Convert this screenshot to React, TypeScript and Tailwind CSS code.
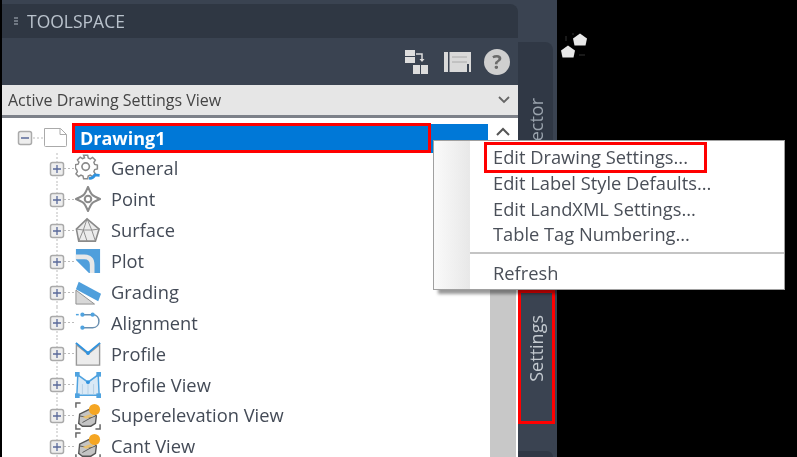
import type { ReactNode } from "react";

const gray = "#8a8a8a";
const blue = "#4fa3e0";

function Gear() {
  return (
    <svg width="26" height="28" viewBox="0 0 28 30" fill="none" stroke={gray} strokeWidth="1.8">
      <path d="M10.500 1.500h5l.7 3.300 2.500 1 2.800-1.800 3.400 3.400-1.800 2.800 1 2.500 3.300.7v4.800l-3.300.7-1 2.500 1.800 2.800-3.400 3.400-2.800-1.800-2.500 1-.7 3.300h-5l-.7-3.300-2.500-1-2.800 1.800-3.400-3.400 1.800-2.800-1-2.500L.500 17.900v-4.800l3.300-.7 1-2.500L3 7.100l3.400-3.400 2.800 1.800 2.500-1z" transform="scale(.88)" />
      <circle cx="11.500" cy="13.500" r="4" />
      <path d="M15 26c3 .5 5-1 6.500-3.500l5 .5" stroke="#2f93e0" strokeWidth="3" />
    </svg>
  );
}

function Point() {
  return (
    <svg width="26" height="26" viewBox="0 0 28 28" fill="none" stroke={gray} strokeWidth="2.200">
      <path d="M14 1c2 5 3 7 4.500 8.500C20 11 22 12 27 14c-5 2-7 3-8.500 4.500C17 20 16 22 14 27c-2-5-3-7-4.500-8.500C8 17 6 16 1 14c5-2 7-3 8.500-4.500C11 8 12 6 14 1z" strokeLinejoin="round" />
      <circle cx="14" cy="14" r="3.500" />
    </svg>
  );
}

function Surface() {
  return (
    <svg width="26" height="26" viewBox="0 0 28 28" fill="none" stroke={gray} strokeWidth="1.700">
      <path d="M13 2l13 11-4 13H4L1.500 13z" fill="#ececec" />
      <path d="M13 2L9 14l-7.500-1M13 2l5 12 8-1M9 14h9M9 14L4 26M9 14l4 12M18 14l4 12" strokeWidth="1" />
    </svg>
  );
}

function Plot() {
  return (
    <svg width="26" height="26" viewBox="0 0 28 28">
      <path d="M1 1h26v26H15L1 13z" fill="#4f9fdc" />
      <path d="M1 7h9c7 0 11 4 11 11v9h-5v-9c0-4-2-6-6-6H1z" fill="#e8e8e8" />
    </svg>
  );
}

function Grading() {
  return (
    <svg width="26" height="26" viewBox="0 0 28 28">
      <path d="M1 27V12l20 15z" fill="#d8d8d8" stroke={gray} />
      <path d="M4 3l24 13-3 8L1 11z" fill="#4f9fdc" />
    </svg>
  );
}

function Alignment() {
  return (
    <svg width="26" height="26" viewBox="0 0 28 28" fill="none" stroke={blue} strokeWidth="1.600">
      <path d="M1 5h3" />
      <path d="M8 5h11c9 0 9 14 0 14H9" stroke="#6a8fb0" />
      <circle cx="8" cy="5" r="1.500" fill={blue} />
      <circle cx="19" cy="5" r="1.500" fill={blue} />
      <circle cx="8" cy="19" r="1.500" fill={blue} />
    </svg>
  );
}

function Profile() {
  return (
    <svg width="26" height="26" viewBox="0 0 28 28" fill="none">
      <path d="M1.500 4l12.500 10L26.500 4v22h-25z" fill="#ececec" stroke="#999" strokeWidth="1.500" />
      <path d="M1 2l13 11L27 2" stroke="#2f93e0" strokeWidth="2" />
      <circle cx="14" cy="13" r="2" fill="#2f93e0" />
    </svg>
  );
}

function ProfileView() {
  return (
    <svg width="26" height="26" viewBox="0 0 28 28" fill="none">
      <path d="M3 3l11 8 11-8 1 22H2z" fill="#d9e9f6" stroke="#4fa3e0" strokeWidth="1.600" />
      <path d="M8 13v11M14 13v11M20 13v11" stroke="#b5cfe4" />
      <rect x="0" y="0" width="5" height="5" fill="#4fa3e0" />
      <rect x="23" y="0" width="5" height="5" fill="#4fa3e0" />
      <rect x="0" y="23" width="5" height="5" fill="#4fa3e0" />
      <rect x="23" y="23" width="5" height="5" fill="#4fa3e0" />
      <circle cx="14" cy="11" r="2" fill="#2f93e0" />
    </svg>
  );
}

function Cant() {
  return (
    <svg width="26" height="28" viewBox="0 0 28 30" fill="none">
      <path d="M1 6V1h5M1 24v5h5M22 29h5v-5" stroke="#666" strokeWidth="1.600" />
      <path d="M5 13l12-6 6 8-1 8-5 3H8l-4-3z" fill="#c4c4c4" stroke="#555" strokeWidth="1.500" />
      <path d="M5 15l12 2 5-2M8 22l9-5" stroke="#555" />
      <path d="M8 16l8-3 4 2-8 3z" fill="#e8c070" />
      <circle cx="21" cy="8" r="6" fill="#f5a623" />
    </svg>
  );
}

// tree connector with the plus box and dashed lines
function Connector() {
  return (
    <svg width="73" height="31" viewBox="0 0 73 31" fill="none" className="shrink-0">
      <path d="M55 0v31" stroke="#bbb" strokeDasharray="2 2" />
      <path d="M62 15.500h10" stroke="#bbb" strokeDasharray="2 2" />
      <rect x="48.500" y="9.500" width="13" height="13" rx="2" fill="#eee" stroke="#aaa" strokeWidth="1.500" />
      <path d="M51 16h8M55 12v8" stroke="#5a6a9a" strokeWidth="1.300" />
    </svg>
  );
}

const items: { name: string; Icon: () => ReactNode }[] = [
  { name: "General", Icon: Gear },
  { name: "Point", Icon: Point },
  { name: "Surface", Icon: Surface },
  { name: "Plot", Icon: Plot },
  { name: "Grading", Icon: Grading },
  { name: "Alignment", Icon: Alignment },
  { name: "Profile", Icon: Profile },
  { name: "Profile View", Icon: ProfileView },
  { name: "Superelevation View", Icon: Cant },
  { name: "Cant View", Icon: Cant },
];

const menuItems = ["Edit Drawing Settings...", "Edit Label Style Defaults...", "Edit LandXML Settings...", "Table Tag Numbering..."];

export default function App() {
  return (
    <div
      className="relative flex h-[457px] w-[797px] overflow-hidden bg-black blur-[0.7px]"
      style={{ fontFamily: '"Open Sans", "Noto Sans", sans-serif' }}
    >
      {/* main palette */}
      <div className="ml-[2px] flex w-[516px] flex-col bg-[#3a4351]">
        <div className="mt-[4px] flex h-[34px] shrink-0 items-center rounded-tr-lg bg-[#2f3743] pl-[12px]">
          <div className="grid grid-cols-1 gap-[1px]">
            <span className="h-[2px] w-[4px] bg-[#6f7782]" />
            <span className="h-[2px] w-[4px] bg-[#6f7782]" />
            <span className="h-[2px] w-[4px] bg-[#6f7782]" />
          </div>
          <span className="ml-[9px] text-[17.500px] text-[#b9c2cc]">TOOLSPACE</span>
        </div>

        <div className="flex h-[47px] shrink-0 items-center justify-end rounded-tr-lg pr-[8px]">
          <svg width="26" height="26" viewBox="0 0 26 26" fill="none" className="mr-[14px]">
            <rect x="1" y="1" width="10" height="6" fill="#ddd" />
            <rect x="1" y="8" width="10" height="6" fill="#ddd" />
            <rect x="9" y="16" width="7" height="9" fill="#ddd" />
            <rect x="17" y="16" width="7" height="9" fill="#ddd" />
            <path d="M12 5h6v7" stroke="#ddd" strokeWidth="1.500" />
            <path d="M15.500 10h5l-2.500 3z" fill="#ddd" />
          </svg>
          <svg width="28" height="20" viewBox="0 0 28 20" className="mr-[12px]">
            <rect x="0" y="0" width="27" height="20" fill="#d9d9d9" />
            <rect x="4" y="0" width="1.500" height="20" fill="#3a4351" />
            <path d="M8 5h15M8 10h15" stroke="#aaa" />
            <rect x="23" y="12" width="2" height="8" fill="#3a4351" />
          </svg>
          <div className="flex h-[26px] w-[26px] items-center justify-center rounded-full bg-[#cfcfcf] text-[20px] font-bold text-[#6b6b6b]">
            ?
          </div>
        </div>

        <div className="flex h-[30px] shrink-0 items-center justify-between bg-[#e6e6e6] pl-[6px] pr-[8px]">
          <span className="text-[16px] text-[#444]">Active Drawing Settings View</span>
          <svg width="12" height="8" viewBox="0 0 12 8" fill="none" stroke="#666" strokeWidth="1.800">
            <path d="M1 1l5 5 5-5" />
          </svg>
        </div>
        <div className="h-[3px] shrink-0 bg-[#7d8189]" />

        <div className="flex min-h-0 flex-1 overflow-hidden bg-white">
          <div className="w-[486px] shrink-0 pt-[5px]">
            <div className="relative flex h-[30px] items-center">
              <svg width="70" height="30" viewBox="0 0 70 30" fill="none" className="shrink-0">
                <rect x="16.500" y="8.500" width="13" height="13" rx="2" fill="#eee" stroke="#aaa" strokeWidth="1.500" />
                <path d="M19 15h8" stroke="#5a6a9a" strokeWidth="1.500" />
                <path d="M31 15h10" stroke="#bbb" strokeDasharray="2 2" />
                <path d="M42.500 5.500h16l6 6v11a1 1 0 0 1-1 1h-20a1 1 0 0 1-1-1z" fill="#fff" stroke="#aaa" />
                <path d="M58 5.500v6h6.500" stroke="#aaa" />
              </svg>
              <div className="flex h-[29px] flex-1 items-center bg-[#0078d7] pl-[8px] text-[18px] font-bold text-white">Drawing1</div>
              <div className="absolute bottom-0 left-[70px] top-0 w-[359px] border-[3px] border-[#ff0000]" />
            </div>

            {items.map((item) => (
              <div key={item.name} className="flex h-[30.900px] items-center">
                <Connector />
                <div className="flex w-[26px] shrink-0 items-center justify-center">
                  <item.Icon />
                </div>
                <span className="ml-[10px] text-[18.300px] leading-none text-[#444b57]">{item.name}</span>
              </div>
            ))}
          </div>

          {/* scrollbar */}
          <div className="ml-[2px] flex w-[26px] flex-col bg-[#c8c8c8]">
            <div className="flex h-[30px] items-start justify-center bg-white pt-[9px]">
              <svg width="14" height="9" viewBox="0 0 14 9" fill="none" stroke="#555" strokeWidth="2">
                <path d="M1 8l6-6 6 6" />
              </svg>
            </div>
          </div>
        </div>
      </div>

      {/* side tabs */}
      <div className="flex w-[39px] flex-col bg-[#3a4351] pt-[42px]">
        <div className="flex h-[249px] w-[35px] flex-col items-center rounded-tr-lg bg-[#303845] pt-[56px]">
          <span className="rotate-180 text-[18px] leading-none text-[#9aa3ad] [writing-mode:vertical-rl]">Prospector</span>
        </div>
        <div className="flex h-[160px] w-[36px] flex-col items-center rounded-br-lg bg-[#3a4351] pt-[24px]">
          <span className="rotate-180 text-[18px] leading-none text-[#c3c9cf] [writing-mode:vertical-rl]">Settings</span>
        </div>
        <div className="w-[35px] flex-1 rounded-tr-lg bg-[#303845]" />
      </div>

      {/* drawing area */}
      <div className="flex-1 bg-black pl-[3px] pt-[32px]">
        <svg width="30" height="30" viewBox="0 0 30 30" fill="none">
          <path d="M20 1.500l7 5-1.500 7h-11l-1.500-7z" fill="#e8e8e8" />
          <path d="M8 13.500l7 5-1.500 7h-11l-1.500-7z" fill="#e8e8e8" />
          <path d="M6 4v5M12 2h2M19 23h6" stroke="#333" />
        </svg>
      </div>

      {/* red outline on the Settings tab */}
      <div className="absolute left-[518px] top-[290px] h-[134px] w-[37px] border-[3px] border-[#ff0000]" />

      {/* context menu */}
      <div className="absolute left-[433px] top-[140px] flex h-[150px] w-[352px] border border-[#a0a0a0] bg-white shadow-[5px_4px_3px_rgba(0,0,0,0.4)]">
        <div className="w-[36px] bg-gradient-to-r from-[#fafafa] to-[#e8e8e8]" />
        <div className="flex-1 pt-[3px]">
          {menuItems.map((label, i) => (
            <div key={label} className="relative flex h-[25.700px] items-center pl-[23px] text-[18.300px] text-[#4a4f58]">
              {label}
              {i === 0 && <div className="absolute left-[14px] top-[-2px] h-[31px] w-[223px] border-[3px] border-[#ff0000]" />}
            </div>
          ))}
          <div className="mt-[5px] h-[2px] bg-[#c4c4c4]" />
          <div className="mt-[6px] flex h-[26px] items-center pl-[23px] text-[18.300px] text-[#4a4f58]">Refresh</div>
        </div>
      </div>
    </div>
  );
}
